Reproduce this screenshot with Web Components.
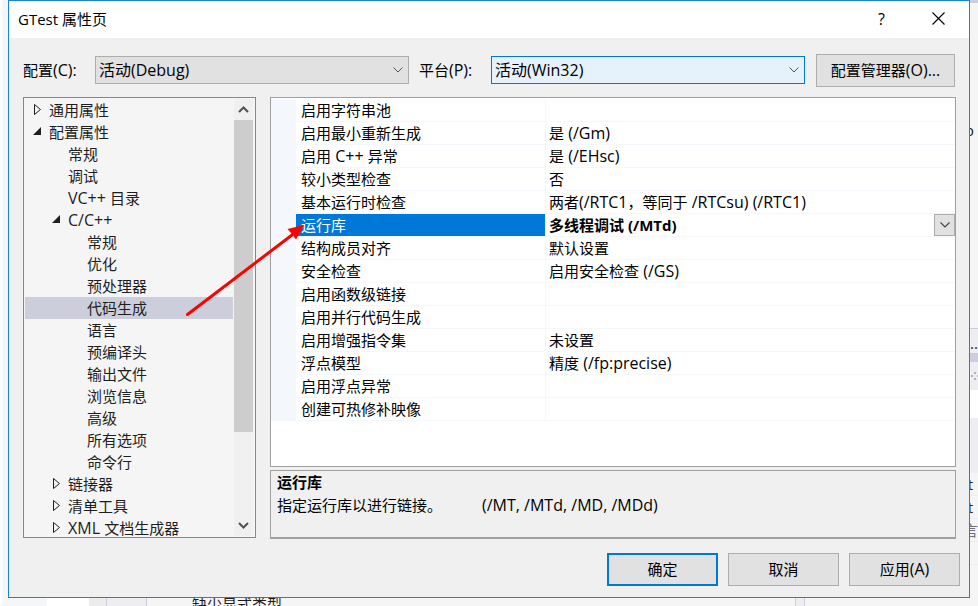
<!DOCTYPE html>
<html lang="zh-CN">
<head>
<meta charset="utf-8">
<title>GTest 属性页</title>
<style>
	body {
		margin: 0;
		font: 15px/22px "Open Sans", "Noto Sans CJK SC", sans-serif;
		color: #000;
	}

	.latin {
		font-size: 16px;
		line-height: 1;
	}
</style>
</head>
<body>

<template id="ide-window-tmpl">
	<style>
		:host {
			display: grid;
			grid-template: minmax(0, 1fr) 8px / 8px minmax(0, 1fr) 8px;
			height: 100vh;
			overflow: hidden;
			background: #f5f5f5;
			color: #1e1e1e;
		}

		.left {
			border-left: 2px solid #fff;
			background: #f5f6f9;
		}

		.right {
			display: flex;
			flex-direction: column;
			overflow: hidden;
		}

		.right > div {
			flex: none;
			box-sizing: border-box;
			display: flex;
			align-items: center;
			justify-content: flex-end;
			overflow: hidden;
		}

		.strip { height: 3px; background: #cccedb; }
		.editor { height: 325px; padding: 0 4px 72px 0; }
		.bar { height: 25px; padding-top: 4px; background: #eeeef2; border-top: 1px solid #cccedb; }
		.caption { height: 9px; background: #cccedb; }
		.tools { height: 28px; background: #eeeef2; color: #999; }
		.field { height: 28px; background: #fff; }
		.gap { height: 55px; background: #eeeef2; }
		.line { height: 23px; border-bottom: 1px solid #eeeef2; padding-right: 5px; }
		.line.muted { color: #717171; padding: 0; }

		.bottom {
			grid-column: 1 / -1;
			display: flex;
			overflow: hidden;
			line-height: 12px;
		}

		.bottom > * {
			flex: none;
			box-sizing: border-box;
		}

		.margin { width: 47px; background: #f5f6f9; border-left: 2px solid #fff; }
		.page { width: 42px; background: #fff; }
		.shade { width: 17px; background: #ececee; }
		.splitter { width: 41px; background: #eeeef2; border: solid #cccedb; border-width: 0 1px; }
		.bottom .text { flex: 1; padding-left: 45px; }
		.splitter.narrow { width: 10px; }
		.rest { width: 173px; }
	</style>

	<div class="left"></div>
	<slot></slot>
	<div class="right">
		<div class="strip"></div>
		<div class="editor">p</div>
		<div class="bar">...</div>
		<div class="caption"></div>
		<div class="tools">
			<svg width="8" height="8" fill="#b5b5b8"><path d="M1 3h2v2H1zM4 0h2v2H4zM4 6h2v2H4zM7 3h1v2H7z"/></svg>
		</div>
		<div class="field"></div>
		<div class="gap"></div>
		<div class="line">t</div>
		<div class="line">t</div>
		<div class="line muted">言</div>
		<div class="line"></div>
	</div>
	<div class="bottom">
		<div class="margin"></div>
		<div class="page"></div>
		<div class="shade"></div>
		<div class="splitter"></div>
		<div class="text">缺少显式类型</div>
		<div class="splitter narrow"></div>
		<div class="rest"></div>
	</div>
</template>

<template id="property-dialog-tmpl">
	<style>
		:host {
			position: relative;
			box-sizing: border-box;
			display: flex;
			flex-direction: column;
			min-width: 0;
			border: 1px solid #1883d7;
			background: #f0f0f0;
			color: #000;
		}

		header {
			display: flex;
			align-items: center;
			box-sizing: border-box;
			height: 37px;
			padding: 0 2px 2px 9px;
			background: #fff;
		}

		h1 {
			flex: 1;
			margin: 0;
			font: inherit;
		}

		header button {
			display: grid;
			place-items: center;
			width: 57px;
			height: 35px;
			padding: 0;
			border: 0;
			background: none;
			font: inherit;
			font-size: 16px;
			color: inherit;
		}

		.toolbar {
			display: flex;
			align-items: flex-start;
			gap: 10px;
			padding: 16px 14px 10px;
		}

		main {
			flex: 1;
			display: grid;
			grid-template: minmax(0, 1fr) 69px / 233px minmax(0, 1fr);
			gap: 3px 14px;
			min-height: 0;
			padding: 0 13px 0 14px;
		}

		::slotted([slot="tree"]) {
			grid-row: span 2;
		}

		footer {
			display: flex;
			justify-content: flex-end;
			gap: 10px;
			padding: 14px 9px 11px;
		}
	</style>

	<header>
		<h1></h1>
		<button type="button" aria-label="帮助">?</button>
		<button type="button" aria-label="关闭">
			<svg width="13" height="13" fill="none" stroke="#000" stroke-width="1.1"><path d="M.5.5l12 12M12.5.5l-12 12"/></svg>
		</button>
	</header>
	<div class="toolbar"><slot name="toolbar"></slot></div>
	<main>
		<slot name="tree"></slot>
		<slot name="grid"></slot>
		<slot name="description"></slot>
	</main>
	<footer><slot name="footer"></slot></footer>
	<slot></slot>
</template>

<template id="combo-field-tmpl">
	<style>
		:host {
			flex: 1;
			display: flex;
			align-items: center;
			min-width: 0;
			padding-top: 2px;
		}

		label {
			flex: none;
			width: 72px;
		}

		.latin {
			font-size: 16px;
			line-height: 1;
		}

		.box {
			flex: 1;
			display: grid;
			align-items: center;
			min-width: 0;
		}

		select, svg {
			grid-area: 1 / 1;
		}

		select {
			appearance: none;
			box-sizing: border-box;
			width: 100%;
			height: 28px;
			margin: 0;
			padding: 0 24px 0 3px;
			border: 1px solid #adadad;
			border-radius: 0;
			background: #e1e1e1;
			font: inherit;
			font-size: 16px;
			color: inherit;
		}

		:host([hot]) select {
			border-color: #0078d7;
			background: #e5f1fb;
		}

		svg {
			justify-self: end;
			margin-right: 6px;
			pointer-events: none;
		}
	</style>

	<label for="combo"></label>
	<div class="box">
		<select id="combo"></select>
		<svg width="10" height="6" fill="none" stroke="#555"><path d="M.5.5L5 5 9.5.5"/></svg>
	</div>
</template>

<template id="push-button-tmpl">
	<style>
		:host {
			flex: none;
			display: block;
			width: 111px;
		}

		:host([wide]) {
			width: 139px;
			margin-left: 1px;
		}

		button {
			box-sizing: border-box;
			width: 100%;
			height: 33px;
			padding: 0 0 2px;
			border: 1px solid #adadad;
			background: #e1e1e1;
			font: inherit;
			color: inherit;
		}

		:host([default]) button {
			border: 2px solid #0078d7;
		}
	</style>

	<button type="button"><slot></slot></button>
</template>

<template id="tree-view-tmpl">
	<style>
		:host {
			display: flex;
			min-height: 0;
			margin-bottom: 1px;
			padding: 1px;
			border: 1px solid #828790;
			box-sizing: border-box;
			background: #f5f5f5;
			color: #1e1e1e;
			overflow: hidden;
		}

		.items {
			flex: 1;
			overflow: hidden;
		}

		.scrollbar {
			display: flex;
			flex-direction: column;
			align-items: center;
			width: 19px;
			margin: 0 1px;
			background: #f0f0f0;
		}

		.up, .down {
			flex: none;
			display: grid;
			place-items: center;
			height: 21px;
		}

		.track {
			flex: 1;
			width: 100%;
		}

		.thumb {
			height: 79%;
			background: #cdcdcd;
		}
	</style>

	<div class="items" role="tree"><slot></slot></div>
	<div class="scrollbar">
		<div class="up"><svg width="11" height="7" fill="none" stroke="#505050" stroke-width="2"><path d="M1 6l4.500-4.500L10 6"/></svg></div>
		<div class="track"><div class="thumb"></div></div>
		<div class="down"><svg width="11" height="7" fill="none" stroke="#505050" stroke-width="2"><path d="M1 1l4.500 4.500L10 1"/></svg></div>
	</div>
</template>

<template id="tree-node-tmpl">
	<style>
		:host {
			display: flex;
			align-items: center;
			height: 22px;
			padding-left: calc(var(--level, 0) * 19px + 8px);
			white-space: nowrap;
		}

		:host([level="1"]) { --level: 1; }
		:host([level="2"]) { --level: 2; }

		:host([selected]) {
			background: #cccedb;
		}

		svg {
			flex: none;
			width: 16px;
			height: 12px;
			visibility: hidden;
		}

		:host([state]) svg { visibility: visible; }

		.open, :host([state="open"]) .closed { display: none; }
		:host([state="open"]) .open { display: block; }
	</style>

	<svg viewBox="0 0 16 12">
		<path class="closed" d="M1.500 .5v10L7.500 5.500z" fill="none" stroke="#1e1e1e"/>
		<path class="open" d="M8 1v8H0z" fill="#1e1e1e"/>
	</svg>
	<div><slot></slot></div>
</template>

<template id="property-grid-tmpl">
	<style>
		:host {
			display: block;
			min-height: 0;
			box-sizing: border-box;
			padding-top: 1px;
			border: 1px solid #a0a0a0;
			background: #fff;
			overflow: hidden;
		}

		table {
			width: 100%;
			table-layout: fixed;
			border-collapse: separate;
			border-spacing: 0;
			border-left: 25px solid #f4f7fc;
			box-sizing: border-box;
		}

		col.name { width: 250px; }

		th, td {
			height: 22px;
			padding: 0 0 0 3px;
			border-bottom: 1px solid #f4f7fc;
			font-weight: 400;
			text-align: left;
			white-space: nowrap;
		}

		th {
			padding-left: 5px;
			border-right: 1px solid #f4f7fc;
		}

		.latin {
			font-size: 16px;
			line-height: 1;
		}

		tr.current th {
			background: #0078d7;
			background-clip: padding-box;
			color: #fff;
		}

		/* the bold Latin face is already wide enough */
		tr.current .latin {
			font-size: inherit;
		}

		tr.current td {
			font-weight: 700;
		}

		.value {
			display: flex;
			justify-content: space-between;
		}

		.value button {
			display: grid;
			place-items: center;
			width: 21px;
			height: 22px;
			padding: 0;
			border: 1px solid #adadad;
			background: #e1e1e1;
		}
	</style>

	<table>
		<colgroup><col class="name"><col></colgroup>
		<tbody></tbody>
	</table>
</template>

<template id="property-description-tmpl">
	<style>
		:host {
			display: block;
			box-sizing: border-box;
			padding-left: 6px;
			border: 1px solid #a0a0a0;
			border-bottom-width: 2px;
			line-height: 23px;
		}

		h2 {
			margin: 0;
			font-size: inherit;
		}

		p {
			display: flex;
			align-items: baseline;
			gap: 40px;
			margin: 0;
		}
	</style>

	<h2><slot name="title"></slot></h2>
	<p><slot></slot></p>
</template>

<template id="pointer-arrow-tmpl">
	<style>
		/* annotation drawn over the tree and the grid */
		:host {
			position: absolute;
			left: 177px;
			top: 223px;
			pointer-events: none;
		}

		svg { display: block; }
	</style>

	<svg width="120" height="94" viewBox="0 0 120 94">
		<path d="M1.500 90.500L106 11" fill="none" stroke="#f00" stroke-width="3" stroke-linecap="round"/>
		<path d="M118 1L101.500 5l4 4.500 4.500 6z" fill="#f00"/>
	</svg>
</template>

<ide-window>
	<property-dialog caption="GTest 属性页">
		<combo-field slot="toolbar" label="配置(C):" value="活动(Debug)"></combo-field>
		<combo-field slot="toolbar" label="平台(P):" value="活动(Win32)" hot></combo-field>
		<push-button slot="toolbar" wide>配置管理器<span class="latin">(O)...</span></push-button>

		<tree-view slot="tree">
			<tree-node state="closed">通用属性</tree-node>
			<tree-node state="open">配置属性</tree-node>
			<tree-node level="1">常规</tree-node>
			<tree-node level="1">调试</tree-node>
			<tree-node level="1"><span class="latin">VC++ </span>目录</tree-node>
			<tree-node level="1" state="open"><span class="latin">C/C++</span></tree-node>
			<tree-node level="2">常规</tree-node>
			<tree-node level="2">优化</tree-node>
			<tree-node level="2">预处理器</tree-node>
			<tree-node level="2" selected>代码生成</tree-node>
			<tree-node level="2">语言</tree-node>
			<tree-node level="2">预编译头</tree-node>
			<tree-node level="2">输出文件</tree-node>
			<tree-node level="2">浏览信息</tree-node>
			<tree-node level="2">高级</tree-node>
			<tree-node level="2">所有选项</tree-node>
			<tree-node level="2">命令行</tree-node>
			<tree-node level="1" state="closed">链接器</tree-node>
			<tree-node level="1" state="closed">清单工具</tree-node>
			<tree-node level="1" state="closed"><span class="latin">XML </span>文档生成器</tree-node>
		</tree-view>

		<property-grid slot="grid"></property-grid>

		<property-description slot="description">
			<span slot="title">运行库</span>
			<span>指定运行库以进行链接。</span>
			<span class="latin">(/MT, /MTd, /MD, /MDd)</span>
		</property-description>

		<push-button slot="footer" default>确定</push-button>
		<push-button slot="footer">取消</push-button>
		<push-button slot="footer">应用<span class="latin">(A)</span></push-button>

		<pointer-arrow></pointer-arrow>
	</property-dialog>
</ide-window>

<script>
	// Latin runs are set one size up from the Chinese text
	function markLatin (text) {
		return text.replace(/[ -~]+/g, '<span class="latin">$&</span>');
	}

	class TemplateElem extends HTMLElement {
		constructor () {
			super();

			const tmpl = document.querySelector('#' + this.localName + '-tmpl');

			this.attachShadow({mode: 'open'})
				.appendChild(tmpl.content.cloneNode(true));
		}
	}

	class PropertyDialog extends TemplateElem {
		connectedCallback () {
			this.shadowRoot.querySelector('h1').textContent = this.getAttribute('caption');
		}
	}

	class ComboField extends TemplateElem {
		connectedCallback () {
			const select = this.shadowRoot.querySelector('select');

			this.shadowRoot.querySelector('label').innerHTML = markLatin(this.getAttribute('label'));
			select.replaceChildren(new Option(this.getAttribute('value')));
		}
	}

	class TreeNode extends TemplateElem {
		connectedCallback () {
			this.setAttribute('role', 'treeitem');

			if (this.hasAttribute('state')) {
				this.setAttribute('aria-expanded', this.getAttribute('state') === 'open');
			}
		}
	}

	class PropertyGrid extends TemplateElem {
		connectedCallback () {
			this.rows = [
				['启用字符串池', ''],
				['启用最小重新生成', '是 (/Gm)'],
				['启用 C++ 异常', '是 (/EHsc)'],
				['较小类型检查', '否'],
				['基本运行时检查', '两者(/RTC1，等同于 /RTCsu) (/RTC1)'],
				['运行库', '多线程调试 (/MTd)'],
				['结构成员对齐', '默认设置'],
				['安全检查', '启用安全检查 (/GS)'],
				['启用函数级链接', ''],
				['启用并行代码生成', ''],
				['启用增强指令集', '未设置'],
				['浮点模型', '精度 (/fp:precise)'],
				['启用浮点异常', ''],
				['创建可热修补映像', '']
			];
			this.current = 5;
			this.render();
		}

		render () {
			this.shadowRoot.querySelector('tbody').innerHTML = this.rows
				.map(([name, value], i) => i === this.current ?
					`<tr class="current"><th scope="row">${markLatin(name)}</th><td><div class="value"><span>${markLatin(value)}</span>${this.dropButton}</div></td></tr>` :
					`<tr><th scope="row">${markLatin(name)}</th><td>${markLatin(value)}</td></tr>`)
				.join('');
		}

		get dropButton () {
			return '<button type="button" aria-label="展开">' +
				'<svg width="10" height="6" fill="none" stroke="#444" stroke-width="1.2"><path d="M.5.5L5 5 9.5.5"/></svg>' +
				'</button>';
		}
	}

	customElements.define('ide-window', class extends TemplateElem {});
	customElements.define('property-dialog', PropertyDialog);
	customElements.define('combo-field', ComboField);
	customElements.define('push-button', class extends TemplateElem {});
	customElements.define('tree-view', class extends TemplateElem {});
	customElements.define('tree-node', TreeNode);
	customElements.define('property-grid', PropertyGrid);
	customElements.define('property-description', class extends TemplateElem {});
	customElements.define('pointer-arrow', class extends TemplateElem {});
</script>
</body>
</html>
